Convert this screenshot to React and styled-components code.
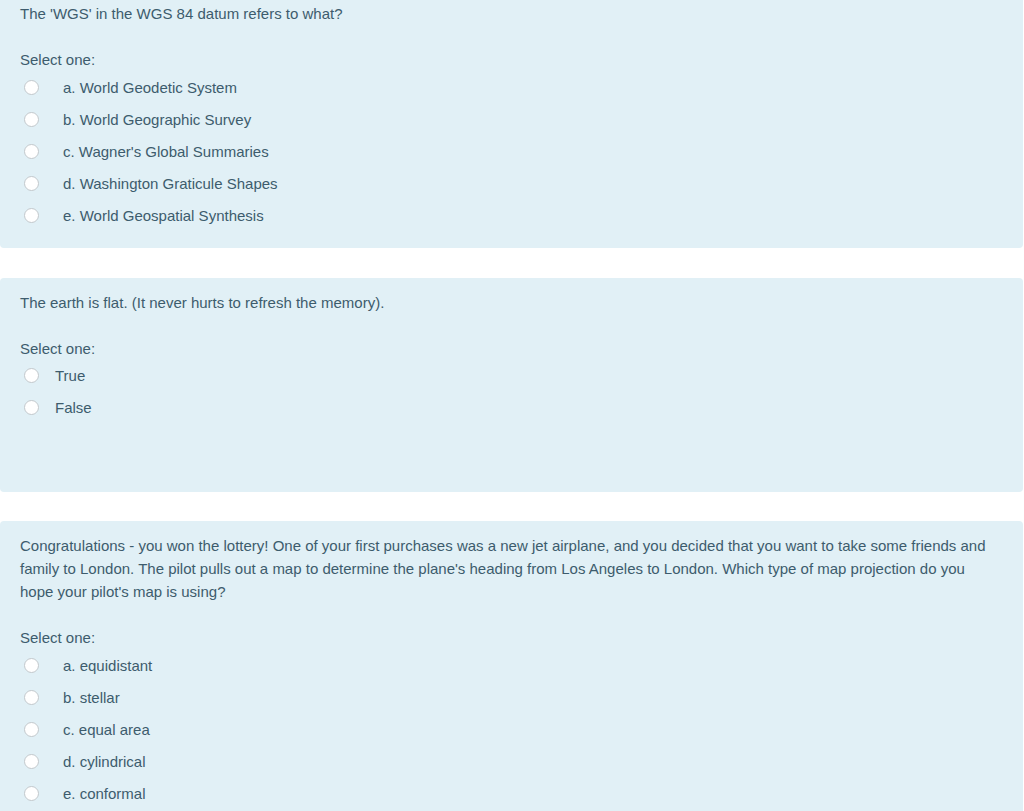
import styled, { createGlobalStyle } from 'styled-components'

const GlobalStyle = createGlobalStyle`
    body {
        margin: 0;
        background: #ffffff;
        font-family: "Liberation Sans", Arial, sans-serif;
        overflow: hidden;
    }
`

const Page = styled.div`
    margin-top: -11px;
    margin-right: 1px;
    display: flex;
    flex-direction: column;
    gap: 29.5px;
`
const Panel = styled.div`
    background-color: #e1f0f6;
    border-radius: 4px;
    padding: 13px 30px 17px 20px;
    min-height: ${props => props.minHeight || 0}px;
    box-sizing: border-box;
    color: #3d5c6d;
    font-size: 15px;
    line-height: 23px;
`
const Question = styled.div`
    margin-bottom: 24px;
`
const Prompt = styled.div`
    line-height: 22px;
`

const Options = styled.div`
    display: flex;
    flex-direction: column;
`
const Option = styled.label`
    display: flex;
    align-items: center;
    height: 32px;
    padding-left: 4px;
`
const Radio = styled.span`
    width: 15px;
    height: 15px;
    border-radius: 50%;
    background: #ffffff;
    border: 1px solid #c2c8cc;
    box-sizing: border-box;
    flex-shrink: 0;
`
const OptionText = styled.span`
    margin-left: ${props => props.lettered ? 24 : 16}px;
`

const questions = [
    {
        text: "The 'WGS' in the WGS 84 datum refers to what?",
        options: [
            'a. World Geodetic System',
            'b. World Geographic Survey',
            "c. Wagner's Global Summaries",
            'd. Washington Graticule Shapes',
            'e. World Geospatial Synthesis',
        ],
        lettered: true,
    },
    {
        text: 'The earth is flat. (It never hurts to refresh the memory).',
        options: ['True', 'False'],
        lettered: false,
        minHeight: 214,
    },
    {
        text: "Congratulations - you won the lottery! One of your first purchases was a new jet airplane, and you decided that you want to take some friends and family to London. The pilot pulls out a map to determine the plane's heading from Los Angeles to London. Which type of map projection do you hope your pilot's map is using?",
        options: [
            'a. equidistant',
            'b. stellar',
            'c. equal area',
            'd. cylindrical',
            'e. conformal',
        ],
        lettered: true,
    },
]

function App() {
    return (
        <>
            <GlobalStyle />
            <Page>
                {questions.map((q, i) => (
                    <Panel key={i} minHeight={q.minHeight}>
                        <Question>{q.text}</Question>
                        <Prompt>Select one:</Prompt>
                        <Options>
                            {q.options.map((opt, j) => (
                                <Option key={j}>
                                    <Radio />
                                    <OptionText lettered={q.lettered}>{opt}</OptionText>
                                </Option>
                            ))}
                        </Options>
                    </Panel>
                ))}
            </Page>
        </>
    )
}

export default App
